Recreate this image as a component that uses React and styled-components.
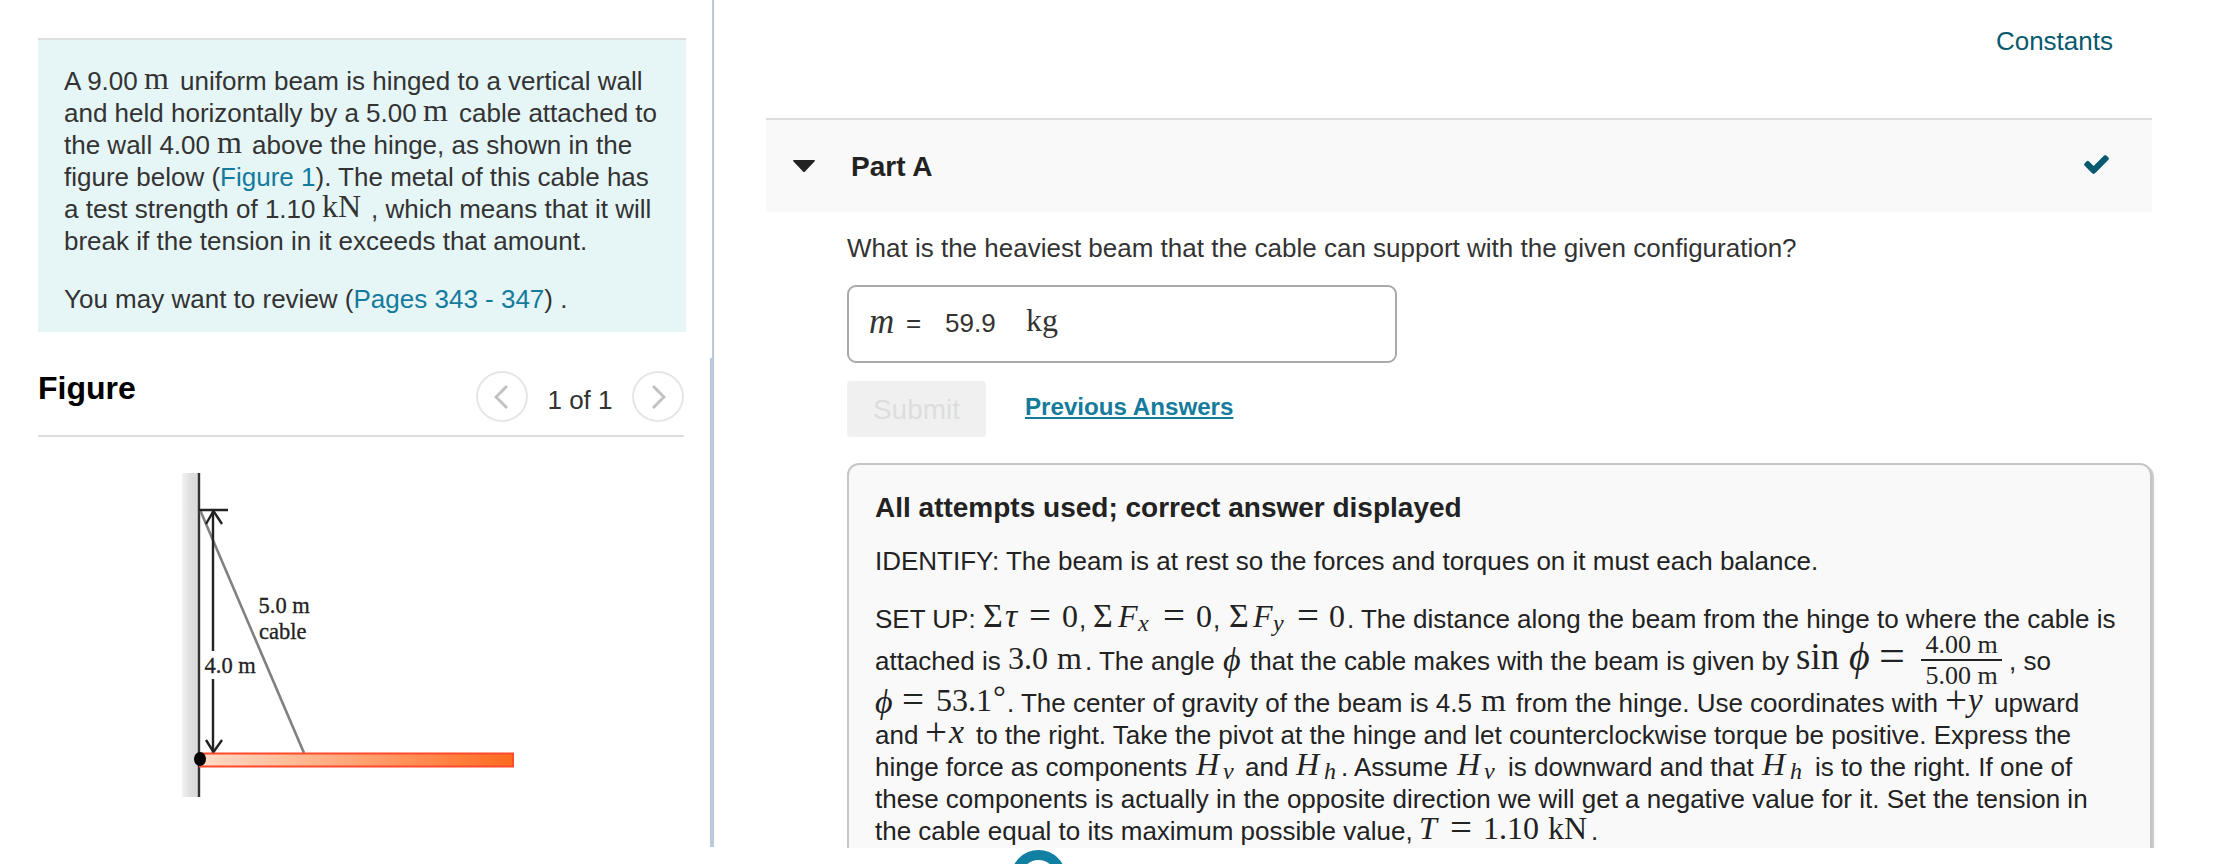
import styled, { createGlobalStyle } from "styled-components";

const GlobalStyle = createGlobalStyle`
  * {
    box-sizing: border-box;
  }

  body {
    margin: 0;
    background: #fff;
    color: #333;
    font-family: "Liberation Sans", Arial, sans-serif;
    font-size: 26px;
    line-height: 32px;
  }

  p, h1, h2, h3 {
    margin: 0;
  }
`;

const Page = styled.div`
  height: 864px;
  overflow: hidden;
`;

const Panels = styled.div`
  display: flex;
  height: 848px;
  overflow: hidden;
`;

const LeftPanel = styled.aside`
  display: flex;
  flex-direction: column;
  flex: none;
  width: 714px;
  height: 847px;
`;

const ProblemPane = styled.div`
  height: 358px;
  padding: 38px 26px 0 38px;
  border-right: 2px solid #bbcbdc;
`;

const ProblemBox = styled.div`
  height: 294px;
  padding: 25px 0 0 26px;
  border-top: 2px solid #dcdfdf;
  background: #e6f6f7;
`;

/* one typeset line, the gap is extra space above it */
const Line = styled.span`
  display: block;
  height: 32px;
  margin-top: ${({ $gap }) => $gap || 0}px;
  white-space: pre;
`;

const Text = styled.span`
  display: inline-block;
  width: ${({ $w }) => ($w ? `${$w}px` : "auto")};
`;

const Sym = styled.span`
  display: inline-block;
  width: ${({ $w }) => $w}px;
  font-family: "Liberation Serif", serif;
  font-size: ${({ $size }) => $size || 32}px;
  font-style: ${({ $it }) => ($it ? "italic" : "normal")};
  line-height: 0;
  vertical-align: ${({ $up = 1 }) => $up}px;
`;

const Link = styled.a`
  color: #147b9c;
`;

const FigurePane = styled.div`
  flex: 1;
  padding: 13px 26px 0 38px;
  border-right: 4px solid #bbcbdc;
`;

const FigureHeader = styled.header`
  display: flex;
  justify-content: space-between;
  height: 66px;
  border-bottom: 2px solid #ddd;
`;

const FigureTitle = styled.h2`
  color: #000;
  font-size: 32px;
  line-height: 34px;
`;

const Pager = styled.div`
  display: flex;
`;

const PageCount = styled.span`
  width: 104px;
  padding-top: 13px;
  text-align: center;
`;

const RoundButton = styled.button`
  display: flex;
  align-items: center;
  justify-content: center;
  width: 52px;
  height: 51px;
  padding: 0;
  border: 2px solid #e6e6e6;
  border-radius: 50%;
  background: #fff;
`;

const Drawing = styled.svg`
  display: block;
  font-family: "Liberation Serif", serif;
  font-size: 22.5px;
`;

const RightPanel = styled.main`
  width: 1438px;
  padding-left: 52px;
`;

const TopBar = styled.div`
  height: 118px;
  padding: 25px 39px 0 0;
  color: #07596f;
  text-align: right;
`;

const PartHeader = styled.header`
  display: flex;
  align-items: center;
  height: 94px;
  padding: 0 43px 0 27px;
  border-top: 2px solid #ddd;
  background: #f9f9f9;
`;

const PartTitle = styled.h2`
  flex: 1;
  margin: 1px 0 0 36px;
  color: #222;
  font-size: 28px;
`;

const CheckIcon = styled.svg`
  margin-bottom: 3px;
  fill: #07596f;
`;

const PartBody = styled.section`
  padding: 20px 0 0 81px;
`;

const AnswerBox = styled.div`
  width: 550px;
  height: 78px;
  margin-top: 21px;
  padding: 20px 0 0 20px;
  border: 2px solid #aaa;
  border-radius: 9px;
  white-space: pre;
`;

const Actions = styled.div`
  display: flex;
  margin-top: 18px;
`;

const Submit = styled.button`
  width: 139px;
  height: 56px;
  padding: 2px 0 0;
  border: 0;
  border-radius: 4px;
  background: #f0f0f0;
  color: #ddd;
  font: 28px "Liberation Sans", Arial, sans-serif;
`;

const PreviousAnswers = styled.a`
  margin: 10px 0 0 39px;
  color: #147b9c;
  font-size: 24.15px;
  font-weight: bold;
  text-decoration: underline;
  text-decoration-thickness: 2px;
  text-underline-offset: 2px;
`;

const Feedback = styled.section`
  width: 1305px;
  height: 440px;
  margin-top: 26px;
  padding: 27px 0 0 26px;
  border: 2px solid #c6c6c6;
  border-radius: 12px;
  background: #f9f9f9;
  box-shadow: 2px 2px 1px #c9c9c9;
  color: #222;
`;

const FeedbackTitle = styled.h3`
  font-size: 28px;
`;

const Paragraph = styled.p`
  margin-top: ${({ $gap }) => $gap}px;
`;

const Fraction = styled.span`
  display: inline-flex;
  flex-direction: column;
  width: 81px;
  margin: -30px 7px -30px -1px;
  vertical-align: 17px;
  font: 26px/30px "Liberation Serif", serif;
  text-align: center;
`;

const Numerator = styled.span`
  height: 28px;
  border-bottom: 2px solid #222;
  line-height: 23px;
`;

const HelpRing = styled.div`
  width: 55px;
  height: 55px;
  margin: 2px 0 0 1011px;
  border: 10px solid #1280a2;
  border-radius: 50%;
`;

const Chevron = ({ points }) => (
  <svg width="16" height="26" viewBox="0 0 16 26" fill="none">
    <polyline points={points} stroke="#c2c2c2" strokeWidth="3" />
  </svg>
);

const Equals = ({ w, size = 39 }) => (
  <Sym $w={w} $size={size} $up={-1}>
    =
  </Sym>
);

const Var = ({ w, sub, subWidth, children }) => (
  <>
    <Sym $w={w} $it>
      {children}
    </Sym>
    <Sym $w={subWidth} $it $size={24} $up={-3}>
      {sub}
    </Sym>
  </>
);

const BeamFigure = () => (
  <Drawing width="646" height="410" viewBox="38 437 646 410">
    <defs>
      <linearGradient id="wall">
        <stop offset="0" stopColor="#f3f3f3" />
        <stop offset="0.5" stopColor="#dedede" />
        <stop offset="1" stopColor="#dadada" />
      </linearGradient>
      <linearGradient id="beam">
        <stop offset="0" stopColor="#ffdcc8" />
        <stop offset="1" stopColor="#ff6a1f" />
      </linearGradient>
    </defs>
    <rect x="182" y="473" width="17" height="324" fill="url(#wall)" />
    <path d="M199 473V797" stroke="#333" strokeWidth="2.4" />
    <path d="M200.500 511L304 753" stroke="#808080" strokeWidth="2.6" />
    <g fill="none" stroke="#222" strokeWidth="2.4">
      <path d="M199 510H228M213 510V651M213 679V753" />
      <path d="M206 524L213.500 511L222 524M206 740L213.500 752L222 740" />
    </g>
    <rect
      x="200"
      y="753.500"
      width="313"
      height="13"
      fill="url(#beam)"
      stroke="#ff4a2c"
      strokeWidth="2"
    />
    <ellipse cx="200" cy="759" rx="6" ry="7" fill="#000" />
    <g fill="#222" stroke="#222" strokeWidth="0.3">
      <text x="258.500" y="613">5.0 m</text>
      <text x="259" y="639">cable</text>
      <text x="204.500" y="673">4.0 m</text>
    </g>
  </Drawing>
);

const App = () => {
  return (
    <Page>
      <GlobalStyle />
      <Panels>
        <LeftPanel>
          <ProblemPane>
            <ProblemBox>
              <p>
                <Line>
                  <Text $w={80}>A 9.00</Text>
                  <Sym $w={36}>m</Sym>
                  <Text>uniform beam is hinged to a vertical wall</Text>
                </Line>
                <Line>
                  <Text $w={359}>and held horizontally by a 5.00</Text>
                  <Sym $w={36}>m</Sym>
                  <Text>cable attached to</Text>
                </Line>
                <Line>
                  <Text $w={153}>the wall 4.00</Text>
                  <Sym $w={35}>m</Sym>
                  <Text>above the hinge, as shown in the</Text>
                </Line>
                <Line>
                  figure below (<Link>Figure 1</Link>). The metal of this cable has
                </Line>
                <Line>
                  <Text $w={258}>a test strength of 1.10</Text>
                  <Sym $w={49}>kN</Sym>
                  <Text>, which means that it will</Text>
                </Line>
                <Line>break if the tension in it exceeds that amount.</Line>
              </p>
              <Paragraph $gap={26}>
                You may want to review (<Link>Pages 343 - 347</Link>) .
              </Paragraph>
            </ProblemBox>
          </ProblemPane>
          <FigurePane>
            <FigureHeader>
              <FigureTitle>Figure</FigureTitle>
              <Pager>
                <RoundButton>
                  <Chevron points="13,2 2,13 13,24" />
                </RoundButton>
                <PageCount>1 of 1</PageCount>
                <RoundButton>
                  <Chevron points="3,2 14,13 3,24" />
                </RoundButton>
              </Pager>
            </FigureHeader>
            <BeamFigure />
          </FigurePane>
        </LeftPanel>

        <RightPanel>
          <TopBar>Constants</TopBar>
          <PartHeader>
            <svg width="22" height="12" viewBox="0 0 22 12">
              <path d="M1 0H21Q22.500 0 21.500 1.500L12 11.500Q11 12.500 10 11.500L0.500 1.500Q-0.500 0 1 0Z" fill="#222" />
            </svg>
            <PartTitle>Part A</PartTitle>
            <CheckIcon width="25" height="19" viewBox="121 334 1550 1188">
              <path d="M1671 566q0 40-28 68l-724 724-136 136q-28 28-68 28t-68-28l-136-136-362-362q-28-28-28-68t28-68l136-136q28-28 68-28t68 28l294 295 656-657q28-28 68-28t68 28l136 136q28 28 28 68z" />
            </CheckIcon>
          </PartHeader>
          <PartBody>
            <p>
              What is the heaviest beam that the cable can support with the
              given configuration?
            </p>
            <AnswerBox>
              <Sym $w={37} $it $size={35} $up={-1}>m</Sym>
              <Text $w={39}>=</Text>
              <Text $w={81}>59.9</Text>
              <Sym $w={40}>kg</Sym>
            </AnswerBox>
            <Actions>
              <Submit disabled>Submit</Submit>
              <PreviousAnswers>Previous Answers</PreviousAnswers>
            </Actions>
            <Feedback>
              <FeedbackTitle>
                All attempts used; correct answer displayed
              </FeedbackTitle>
              <Paragraph $gap={21}>
                IDENTIFY: The beam is at rest so the forces and torques on it
                must each balance.
              </Paragraph>
              <Paragraph $gap={26}>
                <Line>
                  <Text $w={108}>SET UP:</Text>
                  <Sym $w={22} $size={34}>Σ</Sym>
                  <Sym $w={24} $it $size={34}>τ</Sym>
                  <Equals w={33} />
                  <Sym $w={17}>0</Sym>
                  <Text $w={14}>,</Text>
                  <Sym $w={25} $size={34}>Σ</Sym>
                  <Var w={20} sub="x" subWidth={25}>F</Var>
                  <Equals w={33} />
                  <Sym $w={17}>0</Sym>
                  <Text $w={16}>,</Text>
                  <Sym $w={24} $size={34}>Σ</Sym>
                  <Var w={20} sub="y" subWidth={24}>F</Var>
                  <Equals w={32} />
                  <Sym $w={18}>0</Sym>
                  <Text>. The distance along the beam from the hinge to where the cable is</Text>
                </Line>
                <Line $gap={10}>
                  <Text $w={133}>attached is</Text>
                  <Sym $w={49}>3.0</Sym>
                  <Sym $w={28}>m</Sym>
                  <Text $w={138}>. The angle</Text>
                  <Sym $w={27} $it $size={34} $up={-1}>ϕ</Sym>
                  <Text $w={546}>that the cable makes with the beam is given by</Text>
                  <Sym $w={53} $size={37}>sin</Sym>
                  <Sym $w={30} $it $size={40} $up={0}>ϕ</Sym>
                  <Equals w={43} size={46} />
                  <Fraction>
                    <Numerator>4.00 m</Numerator>
                    <span>5.00 m</span>
                  </Fraction>
                  <Text>, so</Text>
                </Line>
                <Line $gap={10}>
                  <Sym $w={27} $it $size={34} $up={-1}>ϕ</Sym>
                  <Equals w={34} />
                  <Sym $w={57}>53.1</Sym>
                  <Sym $w={14} $up={4}>°</Sym>
                  <Text $w={474}>. The center of gravity of the beam is 4.5</Text>
                  <Sym $w={35}>m</Sym>
                  <Text $w={429}>from the hinge. Use coordinates with</Text>
                  <Sym $w={23} $size={39} $up={-1}>+</Sym>
                  <Sym $w={26} $it $size={33}>y</Sym>
                  <Text>upward</Text>
                </Line>
                <Line>
                  <Text $w={50}>and</Text>
                  <Sym $w={24} $size={39} $up={-1}>+</Sym>
                  <Sym $w={27} $it $size={34}>x</Sym>
                  <Text>
                    to the right. Take the pivot at the hinge and let
                    counterclockwise torque be positive. Express the
                  </Text>
                </Line>
                <Line>
                  <Text $w={321}>hinge force as components</Text>
                  <Var w={27} sub="v" subWidth={22}>H</Var>
                  <Text $w={51}>and</Text>
                  <Var w={28} sub="h" subWidth={17}>H</Var>
                  <Text $w={116}>. Assume</Text>
                  <Var w={27} sub="v" subWidth={24}>H</Var>
                  <Text $w={254}>is downward and that</Text>
                  <Var w={28} sub="h" subWidth={25}>H</Var>
                  <Text>is to the right. If one of</Text>
                </Line>
                <Line>
                  these components is actually in the opposite direction we will
                  get a negative value for it. Set the tension in
                </Line>
                <Line>
                  <Text $w={544}>the cable equal to its maximum possible value,</Text>
                  <Sym $w={31} $it>T</Sym>
                  <Equals w={33} />
                  <Sym $w={65}>1.10</Sym>
                  <Sym $w={43}>kN</Sym>
                  <Text>.</Text>
                </Line>
              </Paragraph>
            </Feedback>
          </PartBody>
        </RightPanel>
      </Panels>
      <HelpRing />
    </Page>
  );
};

export default App;
